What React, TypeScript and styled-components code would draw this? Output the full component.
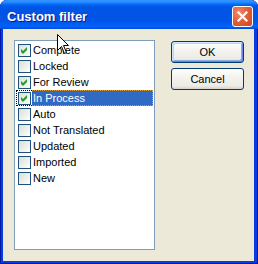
import React from "react";
import styled, { createGlobalStyle } from "styled-components";

const GlobalStyle = createGlobalStyle`
  html, body { margin: 0; padding: 0; background: #ffffff; }
  body { width: 258px; height: 264px; overflow: hidden; }
`;

const Window = styled.div`
  position: relative;
  width: 258px;
  height: 264px;
  box-sizing: border-box;
  display: flex;
  flex-direction: column;
  background: #0a3bdc;
  border-radius: 7px 7px 0 0;
  overflow: hidden;
  box-shadow: inset 1px 0 0 #0019a8, inset -1px 0 0 #0019a8, inset 0 -1px 0 #001a9c;
`;

const TitleBar = styled.div`
  height: 29px;
  flex-shrink: 0;
  box-sizing: border-box;
  display: flex;
  align-items: center;
  justify-content: space-between;
  padding: 3px 5px 0 7px;
  background: linear-gradient(
    180deg,
    #2a8cff 0px,
    #3b95ff 1px,
    #1380ff 3px,
    #0262ee 5px,
    #0055e6 7px,
    #0053e4 16px,
    #0056ea 22px,
    #0063fa 26px,
    #0058ef 28px,
    #0046cf 29px
  );
`;

const Title = styled.span`
  font-family: "Liberation Sans", Arial, sans-serif;
  font-weight: bold;
  font-size: 13px;
  color: #ffffff;
  text-shadow: 1px 1px 0 #0a1a8a;
  letter-spacing: 0;
`;

const CloseButton = styled.div`
  width: 21px;
  height: 21px;
  box-sizing: border-box;
  border: 1px solid #ffffff;
  border-radius: 3px;
  background: radial-gradient(circle at 30% 30%, #f08a6c 0%, #e2603a 45%, #cc4420 100%);
  display: flex;
  align-items: center;
  justify-content: center;
`;

const Client = styled.div`
  flex: 1;
  margin: 0 4px 3px 3px;
  background: #ece9d8;
  display: flex;
  align-items: flex-start;
  gap: 16px;
  padding: 11px 10px 0 11px;
`;

const List = styled.div`
  width: 141px;
  height: 210px;
  box-sizing: border-box;
  border: 1px solid #7f9db9;
  background: #ffffff;
  padding: 1px 1px 0 1px;
  display: flex;
  flex-direction: column;
`;

const Row = styled.div`
  display: flex;
  height: 16px;
`;

const CheckCell = styled.div<{ $focused: boolean }>`
  width: 16px;
  height: 16px;
  box-sizing: border-box;
  border: 1px dotted ${(p) => (p.$focused ? "#000000" : "transparent")};
  border-right: none;
  padding: 1px 0 0 1px;
  flex-shrink: 0;
`;

const Box = styled.div`
  width: 13px;
  height: 13px;
  box-sizing: border-box;
  border: 1px solid #1c5180;
  background: linear-gradient(135deg, #dcdcd7 0%, #f4f4f1 70%, #ffffff 100%);
`;

const Label = styled.div<{ $selected: boolean; $focused: boolean }>`
  flex: 1;
  height: 16px;
  box-sizing: border-box;
  border: 1px dotted ${(p) => (p.$focused ? "#d39a3a" : "transparent")};
  border-left: none;
  padding-left: 1px;
  font-family: "Liberation Sans", Arial, sans-serif;
  font-size: 11px;
  line-height: 14px;
  white-space: nowrap;
  color: ${(p) => (p.$selected ? "#ffffff" : "#000000")};
  background: ${(p) => (p.$selected ? "#316ac5" : "transparent")};
`;

const ButtonColumn = styled.div`
  display: flex;
  flex-direction: column;
  gap: 5px;
  margin-top: 1px;
`;

const XPButton = styled.button<{ $default?: boolean }>`
  width: 73px;
  height: 22px;
  box-sizing: border-box;
  padding: 0;
  border: 1px solid #003c74;
  border-radius: 3px;
  font-family: "Liberation Sans", Arial, sans-serif;
  font-size: 11px;
  color: #000000;
  background: linear-gradient(180deg, #ffffff 0%, #f4f3ee 40%, #ecebe6 85%, #d6d0c5 100%);
  box-shadow: ${(p) =>
    p.$default
      ? "inset 1px 1px 0 #cee7ff, inset -1px -1px 0 #6982ee, inset 2px 2px 0 #bcd4f6, inset -2px -2px 0 #89ade4"
      : "none"};
`;

const Cursor = styled.svg`
  position: absolute;
  left: 57px;
  top: 34px;
`;

type Item = { label: string; checked: boolean };

const items: Item[] = [
  { label: "Complete", checked: true },
  { label: "Locked", checked: false },
  { label: "For Review", checked: true },
  { label: "In Process", checked: true },
  { label: "Auto", checked: false },
  { label: "Not Translated", checked: false },
  { label: "Updated", checked: false },
  { label: "Imported", checked: false },
  { label: "New", checked: false },
];

const selectedIndex = 3;

export default function App() {
  return (
    <>
      <GlobalStyle />
      <Window>
        <TitleBar>
          <Title>Custom filter</Title>
          <CloseButton>
            <svg width="11" height="11" viewBox="0 0 11 11">
              <path d="M1.5 1.5 L9.5 9.5 M9.5 1.5 L1.5 9.5" stroke="#ffffff" strokeWidth="2.2" strokeLinecap="square" />
            </svg>
          </CloseButton>
        </TitleBar>
        <Client>
          <List>
            {items.map((item, i) => (
              <Row key={item.label}>
                <CheckCell $focused={i === selectedIndex}>
                  <Box>
                    {item.checked && (
                      <svg width="11" height="11" viewBox="0 0 11 11" style={{ display: "block" }}>
                        <polygon points="2,4 4,6 8,2 8,5 4,9 2,7" fill="#21a121" />
                      </svg>
                    )}
                  </Box>
                </CheckCell>
                <Label $selected={i === selectedIndex} $focused={i === selectedIndex}>
                  {item.label}
                </Label>
              </Row>
            ))}
          </List>
          <ButtonColumn>
            <XPButton $default>OK</XPButton>
            <XPButton>Cancel</XPButton>
          </ButtonColumn>
        </Client>
        <Cursor width="12" height="21" viewBox="0 0 12 21">
          <path
            d="M0.5 0.5 V16.5 L4.5 12.5 L7.5 19.5 L9.5 18.5 L6.5 11.5 H11.5 Z"
            fill="#ffffff"
            stroke="#000000"
            strokeWidth="1"
          />
        </Cursor>
      </Window>
    </>
  );
}
